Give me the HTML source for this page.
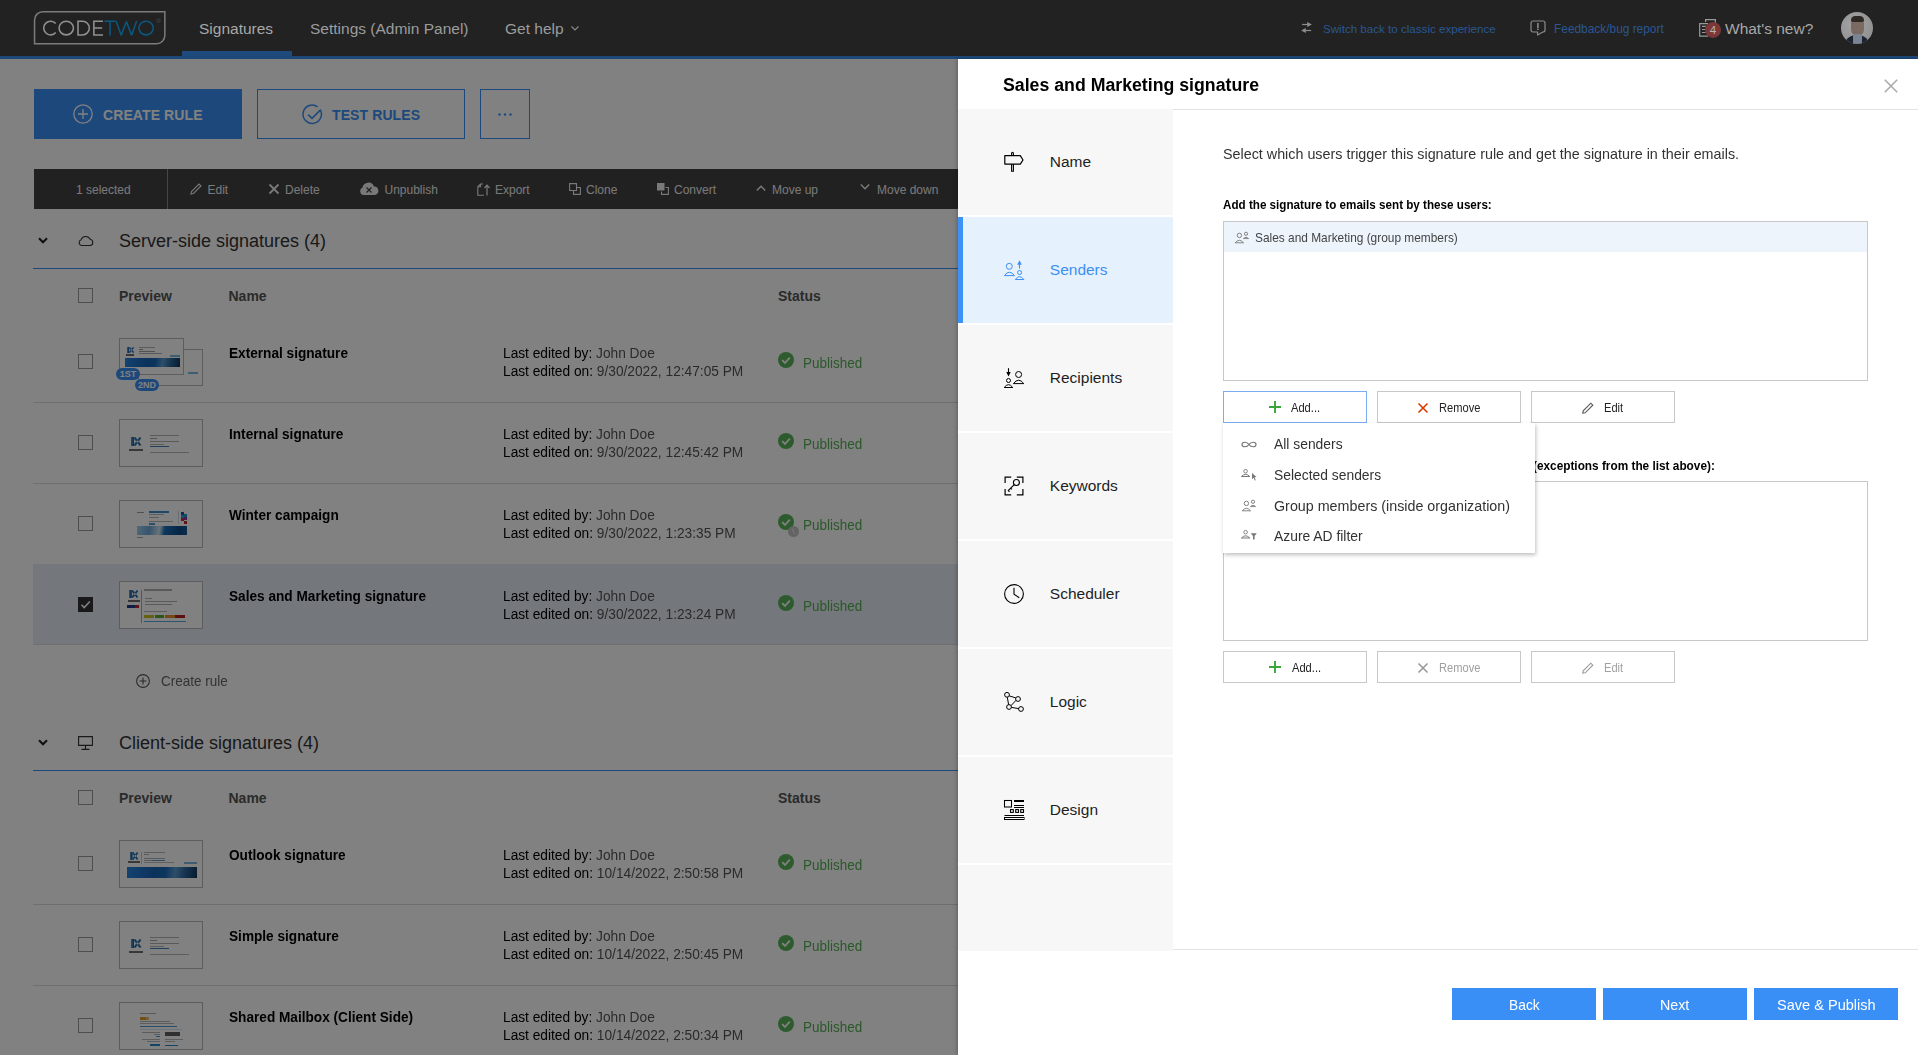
<!DOCTYPE html><html><head><meta charset="utf-8"><style>
*{box-sizing:border-box;margin:0;padding:0}
html,body{width:1918px;height:1055px;overflow:hidden;background:#fff}
body{position:relative;font-family:"Liberation Sans",sans-serif;color:#000}
.a{position:absolute;white-space:nowrap}
svg{position:absolute;overflow:visible}
.box{position:absolute}
</style></head><body>
<div class="box" style="left:0;top:0;width:1918px;height:56px;background:#434343"></div>
<div class="box" style="left:0;top:56px;width:1918px;height:3px;background:#3b8ef0"></div>
<div class="box" style="left:34px;top:89px;width:208px;height:50px;background:#3a8ff6"></div>
<svg style="left:73px;top:104px" width="20" height="20" viewBox="0 0 20 20"><circle cx="10" cy="10" r="9.2" fill="none" stroke="#fff" stroke-width="1.3"/><path d="M10 5 V15 M5 10 H15" stroke="#fff" stroke-width="1.3"/></svg>
<div class="a" style="left:103px;top:106px;font-size:14px;line-height:18px;color:#fff;font-weight:bold;letter-spacing:0.1px;">CREATE RULE</div>
<div class="box" style="left:257px;top:89px;width:208px;height:50px;border:1.5px solid #3a8ff6"></div>
<svg style="left:303px;top:105px" width="20" height="20" viewBox="0 0 20 20"><path d="M17.6 5.5 A9.2 9.2 0 1 1 14.6 1.8" fill="none" stroke="#3a8ff6" stroke-width="1.5"/><path d="M5.2 9.6 L9 13.4 L17.8 4.6" fill="none" stroke="#3a8ff6" stroke-width="1.6"/></svg>
<div class="a" style="left:332px;top:106px;font-size:14px;line-height:18px;color:#3a8ff6;font-weight:bold;letter-spacing:0.1px;">TEST RULES</div>
<div class="box" style="left:480px;top:89px;width:50px;height:50px;border:1.5px solid #3a8ff6"></div>
<svg style="left:498px;top:113px" width="14" height="3" viewBox="0 0 14 3"><circle cx="1.5" cy="1.5" r="1.2" fill="#3a8ff6"/><circle cx="7" cy="1.5" r="1.2" fill="#3a8ff6"/><circle cx="12.5" cy="1.5" r="1.2" fill="#3a8ff6"/></svg>
<div class="box" style="left:34px;top:169px;width:924px;height:40px;background:#414141"></div>
<div class="box" style="left:167px;top:169px;width:1px;height:40px;background:#8a8a8a"></div>
<div class="a" style="left:76px;top:183px;font-size:12px;line-height:15px;color:#f0f0f0;">1 selected</div>
<svg style="left:190px;top:183px" width="12" height="12" viewBox="0 0 12 12"><path d="M1 11 L1.5 8.5 L9 1 L11 3 L3.5 10.5 Z" fill="none" stroke="#f0f0f0" stroke-width="1.1"/></svg>
<div class="a" style="left:207.5px;top:183px;font-size:12px;line-height:15px;color:#f0f0f0;">Edit</div>
<svg style="left:269px;top:184px" width="10" height="10" viewBox="0 0 10 10"><path d="M0.5 0.5 L9.5 9.5 M9.5 0.5 L0.5 9.5" stroke="#f0f0f0" stroke-width="1.8"/></svg>
<div class="a" style="left:285px;top:183px;font-size:12px;line-height:15px;color:#f0f0f0;">Delete</div>
<svg style="left:359px;top:183px" width="20" height="12" viewBox="0 0 20 12"><path d="M4 12 A4 4 0 0 1 3.5 4.5 A6 6 0 0 1 15 3.5 A4.3 4.3 0 0 1 16 12 Z" fill="#f0f0f0"/><path d="M7.5 4.5 L12.5 9.5 M12.5 4.5 L7.5 9.5" stroke="#414141" stroke-width="1.2"/></svg>
<div class="a" style="left:384.5px;top:183px;font-size:12px;line-height:15px;color:#f0f0f0;">Unpublish</div>
<svg style="left:477px;top:183px" width="13" height="13" viewBox="0 0 13 13"><path d="M6 1 H3.5 L0.8 3.8 V12.3 H7 M3.5 1 V3.8 H0.8" fill="none" stroke="#f0f0f0" stroke-width="1.1"/><path d="M10 12.5 V2.5 M7.5 5 L10 2.2 L12.5 5" fill="none" stroke="#f0f0f0" stroke-width="1.2"/></svg>
<div class="a" style="left:495px;top:183px;font-size:12px;line-height:15px;color:#f0f0f0;">Export</div>
<svg style="left:569px;top:183px" width="12" height="12" viewBox="0 0 12 12"><path d="M0.6 0.6 H7.5 V7.5 H0.6 Z M7.5 4.5 H11.4 V11.4 H4.5 V7.5" fill="none" stroke="#f0f0f0" stroke-width="1.1"/></svg>
<div class="a" style="left:586px;top:183px;font-size:12px;line-height:15px;color:#f0f0f0;">Clone</div>
<svg style="left:657px;top:183px" width="12" height="12" viewBox="0 0 12 12"><rect x="0" y="0" width="7.5" height="7.5" fill="#f0f0f0"/><path d="M8.5 4.5 H11.4 V11.4 H4.5 V8.5" fill="none" stroke="#f0f0f0" stroke-width="1.1"/></svg>
<div class="a" style="left:674px;top:183px;font-size:12px;line-height:15px;color:#f0f0f0;">Convert</div>
<svg style="left:756px;top:185px" width="10" height="6" viewBox="0 0 10 6"><path d="M0.8 5.5 L5 1.2 L9.2 5.5" fill="none" stroke="#f0f0f0" stroke-width="1.5"/></svg>
<div class="a" style="left:772px;top:183px;font-size:12px;line-height:15px;color:#f0f0f0;">Move up</div>
<svg style="left:860px;top:184px" width="10" height="6" viewBox="0 0 10 6"><path d="M0.8 0.5 L5 4.8 L9.2 0.5" fill="none" stroke="#f0f0f0" stroke-width="1.5"/></svg>
<div class="a" style="left:877px;top:183px;font-size:12px;line-height:15px;color:#f0f0f0;">Move down</div>
<svg style="left:38px;top:237px" width="10" height="7" viewBox="0 0 10 7"><path d="M1 1.2 L5 5.2 L9 1.2" fill="none" stroke="#222" stroke-width="2.1"/></svg><svg style="left:78px;top:236px" width="16" height="10" viewBox="0 0 16 10"><path d="M3.5 9.5 A3 3 0 0 1 3 3.8 A5 5 0 0 1 12.2 3.3 A3.2 3.2 0 0 1 12.5 9.5 Z" fill="none" stroke="#333" stroke-width="1.1"/></svg><div class="a" style="left:119px;top:230px;font-size:18px;line-height:22px;color:#333;">Server-side signatures (4)</div><div class="box" style="left:33px;top:268px;width:925px;height:1px;background:#3a8ff6"></div><div class="box" style="left:78px;top:288px;width:15px;height:15px;border:1px solid #9a9a9a;background:#fff"></div><div class="a" style="left:119px;top:287px;font-size:14px;line-height:18px;color:#555;font-weight:bold;">Preview</div><div class="a" style="left:228.5px;top:287px;font-size:14px;line-height:18px;color:#555;font-weight:bold;">Name</div><div class="a" style="left:778px;top:287px;font-size:14px;line-height:18px;color:#555;font-weight:bold;">Status</div><div class="box" style="left:33px;top:402px;width:925px;height:1px;background:#dcdcdc"></div><div class="box" style="left:78px;top:354px;width:15px;height:15px;border:1px solid #9a9a9a;background:#fff"></div><div class="box" style="left:138px;top:349px;width:65px;height:37px;border:1px solid #b8b8b8;background:#fff"></div><div class="box" style="left:188px;top:372px;width:10px;height:1.5px;background:#7ab8e0;"></div><div class="box" style="left:119px;top:338px;width:65px;height:37px;border:1px solid #b8b8b8;background:#fff;overflow:hidden"><svg style="left:7px;top:8px" width="7" height="6" viewBox="0 0 10 10" preserveAspectRatio="none"><rect x="0" y="0" width="3" height="10" fill="#5a8fc0"/><rect x="1.5" y="0" width="1.5" height="10" fill="#1f62a8"/><path d="M3.5 0.5 L9.5 9.5 M9.5 0.5 L3.5 9.5" stroke="#2a70b0" stroke-width="2.2"/><rect x="5.5" y="4" width="2" height="2" fill="#fff"/></svg><div class="box" style="left:6px;top:15px;width:8px;height:1.5px;background:#707070;"></div><div class="box" style="left:19px;top:8px;width:16px;height:1px;background:#b4b4b4;"></div><div class="box" style="left:19px;top:10px;width:4px;height:1px;background:#a0a0a0;"></div><div class="box" style="left:19px;top:12px;width:16px;height:1px;background:#a0a0a0;"></div><div class="box" style="left:19px;top:14px;width:23px;height:1px;background:#b0b0b0;"></div><div class="box" style="left:50px;top:16px;width:10px;height:1.5px;background:#7ab8e0;"></div><div class="box" style="left:5px;top:19px;width:55px;height:9px;background:linear-gradient(100deg,#2a86e0 0,#1f74cc 20%,#1664b4 40%,#1a6cbc 55%,#5a9ad0 68%,#2a68a0 82%,#103458 100%);"></div></div><div class="a" style="left:116px;top:368px;width:24px;height:12px;border-radius:6px;background:#3a8ff6;color:#fff;font-size:9px;font-weight:bold;line-height:12px;text-align:center">1ST</div><div class="a" style="left:135px;top:379px;width:24px;height:12px;border-radius:6px;background:#3a8ff6;color:#fff;font-size:9px;font-weight:bold;line-height:12px;text-align:center">2ND</div><div class="a" style="left:228.5px;top:343px;font-size:15px;line-height:19px;color:#000;font-weight:bold;transform:scaleX(0.9090);transform-origin:0 0;">External signature</div><div class="a" style="left:503.3px;top:344px;font-size:14px;line-height:18px;color:#000;transform:scaleX(0.9800);transform-origin:0 0;">Last edited by: <span style="color:#555">John Doe</span></div><div class="a" style="left:503.3px;top:362px;font-size:14px;line-height:18px;color:#000;transform:scaleX(0.9800);transform-origin:0 0;">Last edited on: <span style="color:#555">9/30/2022, 12:47:05 PM</span></div><svg style="left:778px;top:352px" width="16" height="16" viewBox="0 0 16 16"><circle cx="8" cy="8" r="8" fill="#5ab55a"/><path d="M4.2 8.2 L7 11 L11.8 5.6" fill="none" stroke="#fff" stroke-width="1.8"/></svg><div class="a" style="left:803.2px;top:354px;font-size:14.5px;line-height:18px;color:#55b055;transform:scaleX(0.9300);transform-origin:0 0;">Published</div><div class="box" style="left:33px;top:483px;width:925px;height:1px;background:#dcdcdc"></div><div class="box" style="left:78px;top:435px;width:15px;height:15px;border:1px solid #9a9a9a;background:#fff"></div><div class="box" style="left:119px;top:419px;width:84px;height:48px;border:1px solid #b8b8b8;background:#fff;overflow:hidden"><svg style="left:11px;top:17px" width="10" height="9" viewBox="0 0 10 10" preserveAspectRatio="none"><rect x="0" y="0" width="3" height="10" fill="#5a8fc0"/><rect x="1.5" y="0" width="1.5" height="10" fill="#1f62a8"/><path d="M3.5 0.5 L9.5 9.5 M9.5 0.5 L3.5 9.5" stroke="#2a70b0" stroke-width="2.2"/><rect x="5.5" y="4" width="2" height="2" fill="#fff"/></svg><div class="box" style="left:9px;top:29px;width:14px;height:1.5px;background:#707070;"></div><div class="box" style="left:30px;top:15px;width:29px;height:1px;background:#b4b4b4;"></div><div class="box" style="left:30px;top:18px;width:7px;height:1px;background:#a8a8a8;"></div><div class="box" style="left:30px;top:21px;width:29px;height:1px;background:#b0b0b0;"></div><div class="box" style="left:30px;top:24px;width:14px;height:1px;background:#b8b8b8;"></div><div class="box" style="left:30px;top:26px;width:19px;height:1px;background:#3a7fc0;"></div><div class="box" style="left:30px;top:32px;width:39px;height:1px;background:#b8b8b8;"></div></div><div class="a" style="left:228.5px;top:424px;font-size:15px;line-height:19px;color:#000;font-weight:bold;transform:scaleX(0.9090);transform-origin:0 0;">Internal signature</div><div class="a" style="left:503.3px;top:425px;font-size:14px;line-height:18px;color:#000;transform:scaleX(0.9800);transform-origin:0 0;">Last edited by: <span style="color:#555">John Doe</span></div><div class="a" style="left:503.3px;top:443px;font-size:14px;line-height:18px;color:#000;transform:scaleX(0.9800);transform-origin:0 0;">Last edited on: <span style="color:#555">9/30/2022, 12:45:42 PM</span></div><svg style="left:778px;top:433px" width="16" height="16" viewBox="0 0 16 16"><circle cx="8" cy="8" r="8" fill="#5ab55a"/><path d="M4.2 8.2 L7 11 L11.8 5.6" fill="none" stroke="#fff" stroke-width="1.8"/></svg><div class="a" style="left:803.2px;top:435px;font-size:14.5px;line-height:18px;color:#55b055;transform:scaleX(0.9300);transform-origin:0 0;">Published</div><div class="box" style="left:33px;top:564px;width:925px;height:1px;background:#dcdcdc"></div><div class="box" style="left:78px;top:516px;width:15px;height:15px;border:1px solid #9a9a9a;background:#fff"></div><div class="box" style="left:119px;top:500px;width:84px;height:48px;border:1px solid #b8b8b8;background:#fff;overflow:hidden"><div class="box" style="left:17px;top:11px;width:7px;height:1px;background:#a0a0a0;"></div><div class="box" style="left:29px;top:10px;width:20px;height:2px;background:#3a8fd0;"></div><div class="box" style="left:29px;top:13px;width:15px;height:1px;background:#b8b8b8;"></div><div class="box" style="left:29px;top:16px;width:10px;height:1px;background:#b4b4b4;"></div><div class="box" style="left:29px;top:20px;width:24px;height:1px;background:#b8b8b8;"></div><div class="box" style="left:29px;top:22px;width:6px;height:2px;background:#4aa0d8;"></div><div class="box" style="left:58px;top:10px;width:1px;height:13px;background:#cde;"></div><div class="box" style="left:61px;top:11px;width:3px;height:3px;background:#2a4f9c;"></div><div class="box" style="left:64px;top:13px;width:3px;height:3px;background:#1a9ad0;"></div><div class="box" style="left:61px;top:14px;width:3px;height:3px;background:#2aa0e0;"></div><div class="box" style="left:64px;top:16px;width:3px;height:3px;background:#8a3a9a;"></div><div class="box" style="left:61px;top:17px;width:3px;height:3px;background:#c03030;"></div><div class="box" style="left:64px;top:20px;width:3px;height:3px;background:#c02828;"></div><div class="box" style="left:17px;top:25px;width:50px;height:9px;background:linear-gradient(100deg,#a8cce8 0,#6aa8d8 25%,#d0e4f0 45%,#1a70b8 55%,#0a4a8a 85%,#1a5a98 100%);"></div><div class="box" style="left:17px;top:36px;width:6px;height:1px;background:#a8a8a8;"></div></div><div class="a" style="left:228.5px;top:505px;font-size:15px;line-height:19px;color:#000;font-weight:bold;transform:scaleX(0.9090);transform-origin:0 0;">Winter campaign</div><div class="a" style="left:503.3px;top:506px;font-size:14px;line-height:18px;color:#000;transform:scaleX(0.9800);transform-origin:0 0;">Last edited by: <span style="color:#555">John Doe</span></div><div class="a" style="left:503.3px;top:524px;font-size:14px;line-height:18px;color:#000;transform:scaleX(0.9800);transform-origin:0 0;">Last edited on: <span style="color:#555">9/30/2022, 1:23:35 PM</span></div><svg style="left:778px;top:514px" width="16" height="16" viewBox="0 0 16 16"><circle cx="8" cy="8" r="8" fill="#5ab55a"/><path d="M4.2 8.2 L7 11 L11.8 5.6" fill="none" stroke="#fff" stroke-width="1.8"/></svg><div class="a" style="left:803.2px;top:516px;font-size:14.5px;line-height:18px;color:#55b055;transform:scaleX(0.9300);transform-origin:0 0;">Published</div><div class="box" style="left:33px;top:564px;width:925px;height:80px;background:#e6ebf3"></div><div class="box" style="left:33px;top:644px;width:925px;height:1px;background:#dcdcdc"></div><div class="box" style="left:78px;top:597px;width:15px;height:15px;background:#333"></div><svg style="left:78px;top:597px" width="15" height="15" viewBox="0 0 15 15"><path d="M3.5 7.8 L6.2 10.5 L11.8 4.5" fill="none" stroke="#fff" stroke-width="1.6"/></svg><div class="box" style="left:119px;top:581px;width:84px;height:48px;border:1px solid #b8b8b8;background:#fff;overflow:hidden"><svg style="left:9px;top:8px" width="9" height="8" viewBox="0 0 10 10" preserveAspectRatio="none"><rect x="0" y="0" width="3" height="10" fill="#5a8fc0"/><rect x="1.5" y="0" width="1.5" height="10" fill="#1f62a8"/><path d="M3.5 0.5 L9.5 9.5 M9.5 0.5 L3.5 9.5" stroke="#2a70b0" stroke-width="2.2"/><rect x="5.5" y="4" width="2" height="2" fill="#fff"/></svg><div class="box" style="left:8px;top:18px;width:12px;height:1.5px;background:#707070;"></div><div class="box" style="left:7px;top:23px;width:8px;height:3px;background:#1a3f8a;"></div><div class="box" style="left:15px;top:23px;width:4px;height:3px;background:#c02828;"></div><div class="box" style="left:21px;top:8px;width:1px;height:33px;background:#aaa;"></div><div class="box" style="left:24px;top:7px;width:28px;height:2px;background:#b0b0b0;"></div><div class="box" style="left:25px;top:16px;width:7px;height:1px;background:#b4b4b4;"></div><div class="box" style="left:25px;top:19px;width:32px;height:1px;background:#b0b0b0;"></div><div class="box" style="left:25px;top:22px;width:27px;height:1px;background:#b0b0b0;"></div><div class="box" style="left:24px;top:29px;width:23px;height:1px;background:#b8b8b8;"></div><div class="box" style="left:24px;top:33px;width:10px;height:3px;background:#c8c020;"></div><div class="box" style="left:35px;top:33px;width:9px;height:3px;background:#5aa838;"></div><div class="box" style="left:45px;top:33px;width:10px;height:3px;background:#e8902a;"></div><div class="box" style="left:55px;top:33px;width:10px;height:3px;background:#b82020;"></div><div class="box" style="left:24px;top:39px;width:42px;height:1px;background:#5aa8d8;"></div></div><div class="a" style="left:228.5px;top:586px;font-size:15px;line-height:19px;color:#000;font-weight:bold;transform:scaleX(0.9090);transform-origin:0 0;">Sales and Marketing signature</div><div class="a" style="left:503.3px;top:587px;font-size:14px;line-height:18px;color:#000;transform:scaleX(0.9800);transform-origin:0 0;">Last edited by: <span style="color:#555">John Doe</span></div><div class="a" style="left:503.3px;top:605px;font-size:14px;line-height:18px;color:#000;transform:scaleX(0.9800);transform-origin:0 0;">Last edited on: <span style="color:#555">9/30/2022, 1:23:24 PM</span></div><svg style="left:778px;top:595px" width="16" height="16" viewBox="0 0 16 16"><circle cx="8" cy="8" r="8" fill="#5ab55a"/><path d="M4.2 8.2 L7 11 L11.8 5.6" fill="none" stroke="#fff" stroke-width="1.8"/></svg><div class="a" style="left:803.2px;top:597px;font-size:14.5px;line-height:18px;color:#55b055;transform:scaleX(0.9300);transform-origin:0 0;">Published</div>
<svg style="left:787.5px;top:525.5px" width="11" height="11" viewBox="0 0 11 11"><circle cx="5.5" cy="5.5" r="5.5" fill="#c4c4c4"/><path d="M5 2.5 V5.8 L7.3 7.8" fill="none" stroke="#eee" stroke-width="1"/></svg>
<svg style="left:136px;top:674px" width="14" height="14" viewBox="0 0 14 14"><circle cx="7" cy="7" r="6.4" fill="none" stroke="#555" stroke-width="1.1"/><path d="M7 3.5 V10.5 M3.5 7 H10.5" stroke="#555" stroke-width="1.1"/></svg>
<div class="a" style="left:161.2px;top:672px;font-size:14.5px;line-height:18px;color:#666;transform:scaleX(0.9300);transform-origin:0 0;">Create rule</div>
<svg style="left:38px;top:739px" width="10" height="7" viewBox="0 0 10 7"><path d="M1 1.2 L5 5.2 L9 1.2" fill="none" stroke="#222" stroke-width="2.1"/></svg><svg style="left:78px;top:736px" width="15" height="14" viewBox="0 0 15 14"><path d="M0.6 0.6 H14.4 V9.4 H0.6 Z M7.5 9.5 V13 M3.5 13.4 H11.5" fill="none" stroke="#333" stroke-width="1.1"/></svg><div class="a" style="left:119px;top:732px;font-size:18px;line-height:22px;color:#333;">Client-side signatures (4)</div><div class="box" style="left:33px;top:770px;width:925px;height:1px;background:#3a8ff6"></div><div class="box" style="left:78px;top:790px;width:15px;height:15px;border:1px solid #9a9a9a;background:#fff"></div><div class="a" style="left:119px;top:789px;font-size:14px;line-height:18px;color:#555;font-weight:bold;">Preview</div><div class="a" style="left:228.5px;top:789px;font-size:14px;line-height:18px;color:#555;font-weight:bold;">Name</div><div class="a" style="left:778px;top:789px;font-size:14px;line-height:18px;color:#555;font-weight:bold;">Status</div><div class="box" style="left:33px;top:904px;width:925px;height:1px;background:#dcdcdc"></div><div class="box" style="left:78px;top:856px;width:15px;height:15px;border:1px solid #9a9a9a;background:#fff"></div><div class="box" style="left:119px;top:840px;width:84px;height:48px;border:1px solid #b8b8b8;background:#fff;overflow:hidden"><svg style="left:10px;top:11px" width="8" height="8" viewBox="0 0 10 10" preserveAspectRatio="none"><rect x="0" y="0" width="3" height="10" fill="#5a8fc0"/><rect x="1.5" y="0" width="1.5" height="10" fill="#1f62a8"/><path d="M3.5 0.5 L9.5 9.5 M9.5 0.5 L3.5 9.5" stroke="#2a70b0" stroke-width="2.2"/><rect x="5.5" y="4" width="2" height="2" fill="#fff"/></svg><div class="box" style="left:8px;top:20px;width:12px;height:1.5px;background:#707070;"></div><div class="box" style="left:21px;top:11px;width:1px;height:12px;background:#ccc;"></div><div class="box" style="left:24px;top:11px;width:21px;height:1px;background:#b4b4b4;"></div><div class="box" style="left:24px;top:13px;width:5px;height:1px;background:#b4b4b4;"></div><div class="box" style="left:24px;top:17px;width:21px;height:1px;background:#b0b0b0;"></div><div class="box" style="left:24px;top:19px;width:8px;height:1px;background:#b0b0b0;"></div><div class="box" style="left:32px;top:19px;width:13px;height:1px;background:#5a9ad0;"></div><div class="box" style="left:24px;top:21px;width:30px;height:1px;background:#c0c0c0;"></div><div class="box" style="left:64px;top:21px;width:13px;height:2px;background:#7ab8e0;"></div><div class="box" style="left:7px;top:26px;width:70px;height:11px;background:linear-gradient(100deg,#2a86e0 0,#1f74cc 20%,#1664b4 40%,#1a6cbc 55%,#5a9ad0 68%,#2a68a0 82%,#103458 100%);"></div></div><div class="a" style="left:228.5px;top:845px;font-size:15px;line-height:19px;color:#000;font-weight:bold;transform:scaleX(0.9090);transform-origin:0 0;">Outlook signature</div><div class="a" style="left:503.3px;top:846px;font-size:14px;line-height:18px;color:#000;transform:scaleX(0.9800);transform-origin:0 0;">Last edited by: <span style="color:#555">John Doe</span></div><div class="a" style="left:503.3px;top:864px;font-size:14px;line-height:18px;color:#000;transform:scaleX(0.9800);transform-origin:0 0;">Last edited on: <span style="color:#555">10/14/2022, 2:50:58 PM</span></div><svg style="left:778px;top:854px" width="16" height="16" viewBox="0 0 16 16"><circle cx="8" cy="8" r="8" fill="#5ab55a"/><path d="M4.2 8.2 L7 11 L11.8 5.6" fill="none" stroke="#fff" stroke-width="1.8"/></svg><div class="a" style="left:803.2px;top:856px;font-size:14.5px;line-height:18px;color:#55b055;transform:scaleX(0.9300);transform-origin:0 0;">Published</div><div class="box" style="left:33px;top:985px;width:925px;height:1px;background:#dcdcdc"></div><div class="box" style="left:78px;top:937px;width:15px;height:15px;border:1px solid #9a9a9a;background:#fff"></div><div class="box" style="left:119px;top:921px;width:84px;height:48px;border:1px solid #b8b8b8;background:#fff;overflow:hidden"><svg style="left:11px;top:17px" width="10" height="9" viewBox="0 0 10 10" preserveAspectRatio="none"><rect x="0" y="0" width="3" height="10" fill="#5a8fc0"/><rect x="1.5" y="0" width="1.5" height="10" fill="#1f62a8"/><path d="M3.5 0.5 L9.5 9.5 M9.5 0.5 L3.5 9.5" stroke="#2a70b0" stroke-width="2.2"/><rect x="5.5" y="4" width="2" height="2" fill="#fff"/></svg><div class="box" style="left:9px;top:29px;width:14px;height:1.5px;background:#707070;"></div><div class="box" style="left:30px;top:15px;width:29px;height:1px;background:#b4b4b4;"></div><div class="box" style="left:30px;top:18px;width:7px;height:1px;background:#a8a8a8;"></div><div class="box" style="left:30px;top:21px;width:29px;height:1px;background:#b0b0b0;"></div><div class="box" style="left:30px;top:24px;width:14px;height:1px;background:#b8b8b8;"></div><div class="box" style="left:30px;top:26px;width:19px;height:1px;background:#3a7fc0;"></div><div class="box" style="left:30px;top:32px;width:39px;height:1px;background:#b8b8b8;"></div></div><div class="a" style="left:228.5px;top:926px;font-size:15px;line-height:19px;color:#000;font-weight:bold;transform:scaleX(0.9090);transform-origin:0 0;">Simple signature</div><div class="a" style="left:503.3px;top:927px;font-size:14px;line-height:18px;color:#000;transform:scaleX(0.9800);transform-origin:0 0;">Last edited by: <span style="color:#555">John Doe</span></div><div class="a" style="left:503.3px;top:945px;font-size:14px;line-height:18px;color:#000;transform:scaleX(0.9800);transform-origin:0 0;">Last edited on: <span style="color:#555">10/14/2022, 2:50:45 PM</span></div><svg style="left:778px;top:935px" width="16" height="16" viewBox="0 0 16 16"><circle cx="8" cy="8" r="8" fill="#5ab55a"/><path d="M4.2 8.2 L7 11 L11.8 5.6" fill="none" stroke="#fff" stroke-width="1.8"/></svg><div class="a" style="left:803.2px;top:937px;font-size:14.5px;line-height:18px;color:#55b055;transform:scaleX(0.9300);transform-origin:0 0;">Published</div><div class="box" style="left:33px;top:1066px;width:925px;height:1px;background:#dcdcdc"></div><div class="box" style="left:78px;top:1018px;width:15px;height:15px;border:1px solid #9a9a9a;background:#fff"></div><div class="box" style="left:119px;top:1002px;width:84px;height:48px;border:1px solid #b8b8b8;background:#fff;overflow:hidden"><div class="box" style="left:20px;top:10px;width:16px;height:1px;background:#b0b0b0;"></div><div class="box" style="left:20px;top:14px;width:3px;height:3px;background:#e0a020;"></div><div class="box" style="left:23px;top:14px;width:3px;height:3px;background:#e0a020;"></div><div class="box" style="left:26px;top:14px;width:3px;height:3px;background:#e8c070;"></div><div class="box" style="left:20px;top:18px;width:30px;height:1px;background:#b8b8b8;"></div><div class="box" style="left:20px;top:20px;width:34px;height:1px;background:#b8b8b8;"></div><div class="box" style="left:20px;top:23px;width:37px;height:1px;background:#4a98d0;"></div><div class="box" style="left:20px;top:26px;width:42px;height:1px;background:#d8e4ee;"></div><div class="box" style="left:22px;top:29px;width:18px;height:1px;background:#b4b4b4;"></div><div class="box" style="left:34px;top:31px;width:6px;height:1px;background:#b4b4b4;"></div><div class="box" style="left:36px;top:33px;width:4px;height:1px;background:#4a98d0;"></div><div class="box" style="left:45px;top:29px;width:15px;height:4px;background:#606060;"></div><div class="box" style="left:22px;top:36px;width:18px;height:1px;background:#b8b8b8;"></div><div class="box" style="left:45px;top:36px;width:18px;height:1px;background:#b8b8b8;"></div><div class="box" style="left:27px;top:38px;width:13px;height:1px;background:#b8b8b8;"></div><div class="box" style="left:45px;top:38px;width:10px;height:1px;background:#b8b8b8;"></div><div class="box" style="left:30px;top:41px;width:10px;height:2px;background:#2a88c8;"></div><div class="box" style="left:45px;top:42px;width:13px;height:1px;background:#2a88c8;"></div></div><div class="a" style="left:228.5px;top:1007px;font-size:15px;line-height:19px;color:#000;font-weight:bold;transform:scaleX(0.9090);transform-origin:0 0;">Shared Mailbox (Client Side)</div><div class="a" style="left:503.3px;top:1008px;font-size:14px;line-height:18px;color:#000;transform:scaleX(0.9800);transform-origin:0 0;">Last edited by: <span style="color:#555">John Doe</span></div><div class="a" style="left:503.3px;top:1026px;font-size:14px;line-height:18px;color:#000;transform:scaleX(0.9800);transform-origin:0 0;">Last edited on: <span style="color:#555">10/14/2022, 2:50:34 PM</span></div><svg style="left:778px;top:1016px" width="16" height="16" viewBox="0 0 16 16"><circle cx="8" cy="8" r="8" fill="#5ab55a"/><path d="M4.2 8.2 L7 11 L11.8 5.6" fill="none" stroke="#fff" stroke-width="1.8"/></svg><div class="a" style="left:803.2px;top:1018px;font-size:14.5px;line-height:18px;color:#55b055;transform:scaleX(0.9300);transform-origin:0 0;">Published</div>
<div class="box" style="left:0;top:0;width:1918px;height:1055px;background:rgba(0,0,0,0.495)"></div>
<svg style="left:0;top:0" width="200" height="56" viewBox="0 0 200 56"><path d="M42.5 11.75 H164.85 V35.5 A8.2 8.2 0 0 1 156.65 43.7 H34.55 V19.95 A8.2 8.2 0 0 1 42.75 11.75 Z" fill="none" stroke="#7c7c7c" stroke-width="1.5"/><g fill="none" stroke="#919191" stroke-width="1.55"><path d="M55.7 23.6 A6.8 6.85 0 1 0 55.7 32.5"/><ellipse cx="66.25" cy="28.05" rx="7.2" ry="6.85"/><path d="M78 21.2 H82.5 A6.85 6.85 0 0 1 82.5 34.9 H78 Z"/><path d="M103 21.2 H93.85 V34.9 H103 M93.85 28.05 H102.2"/></g><g fill="none" stroke="#0a5880" stroke-width="1.55"><path d="M104.4 21.2 H115.6 M110.1 21.2 V35.6"/><path d="M116.1 21 L121.2 35.2 L126.4 21.6 L131.6 35.2 L136.7 21" stroke-linejoin="bevel"/><ellipse cx="146.1" cy="28.05" rx="7.2" ry="6.85"/></g><circle cx="158.6" cy="20.6" r="1.6" fill="none" stroke="#555" stroke-width="0.6"/></svg>
<div class="a" style="left:199px;top:19px;font-size:15.5px;line-height:19px;color:#a8a8a8;">Signatures</div>
<div class="box" style="left:182px;top:51px;width:110px;height:5px;background:#1e4a7c"></div>
<div class="a" style="left:310px;top:19px;font-size:15.5px;line-height:19px;color:#9c9c9c;">Settings (Admin Panel)</div>
<div class="a" style="left:505px;top:19px;font-size:15.5px;line-height:19px;color:#9c9c9c;">Get help</div>
<svg style="left:571px;top:26px" width="8" height="5" viewBox="0 0 8 5"><path d="M0.5 0.5 L4 4 L7.5 0.5" fill="none" stroke="#888" stroke-width="1.2"/></svg>
<svg style="left:1295px;top:15px" width="25" height="25" viewBox="0 0 25 25"><path d="M7.1 9.5 H13" stroke="#8f8f8f" stroke-width="1.2"/><path d="M12.2 6.9 L16.9 9.5 L12.2 12 Z" fill="#8f8f8f"/><path d="M10.5 15.5 H16.1" stroke="#8f8f8f" stroke-width="1.2"/><path d="M10.8 12.9 L6.2 15.5 L10.8 18.1 Z" fill="#8f8f8f"/></svg>
<div class="a" style="left:1323px;top:22px;font-size:11.6px;line-height:14px;color:#2a5794;">Switch back to classic experience</div>
<svg style="left:1525px;top:14px" width="25" height="25" viewBox="0 0 25 25"><path d="M8 7 H18 A2 2 0 0 1 20 9 V16 A2 2 0 0 1 18 18 H17.8 L12.6 21 V18 H8 A2 2 0 0 1 6 16 V9 A2 2 0 0 1 8 7 Z" fill="none" stroke="#8c8c8c" stroke-width="1.2" stroke-linejoin="round"/><path d="M12.9 9 V14.2" stroke="#8c8c8c" stroke-width="1.6"/><path d="M12.9 14.8 V16" stroke="#8c8c8c" stroke-width="1.6"/></svg>
<div class="a" style="left:1554px;top:22px;font-size:11.9px;line-height:15px;color:#2a5794;">Feedback/bug report</div>
<svg style="left:1695px;top:14px" width="30" height="30" viewBox="0 0 30 30"><path d="M10.6 8 V5.7 H20.4 V12" fill="none" stroke="#9a9a9a" stroke-width="1.2"/><path d="M13 9.7 H4.7 V22.1 H13" fill="none" stroke="#9a9a9a" stroke-width="1.2"/><path d="M7 12.4 H10.8 M7 15.5 H10.8 M7 18.5 H10.8" stroke="#9a9a9a" stroke-width="1.1"/><circle cx="18" cy="15.9" r="8" fill="#7c3838"/><text x="18" y="20" text-anchor="middle" font-family="Liberation Sans" font-size="11.5" fill="#b4b4b4">4</text></svg>
<div class="a" style="left:1725px;top:19px;font-size:15.5px;line-height:19px;color:#a8a8a8;">What's new?</div>
<div class="box" style="left:1841px;top:12px;width:32px;height:32px;border-radius:50%;background:radial-gradient(circle at 40% 40%,#a4a4a4,#8a8a8a);overflow:hidden"><div class="box" style="left:10px;top:6px;width:13px;height:18px;border-radius:6px 6px 8px 8px;background:#7a6a62;filter:blur(0.5px)"></div><div class="box" style="left:10px;top:4px;width:13px;height:6px;border-radius:7px 7px 3px 3px;background:#2e2824;filter:blur(0.5px)"></div><div class="box" style="left:3px;top:23px;width:26px;height:14px;border-radius:12px 12px 0 0;background:#1a2430"></div><div class="box" style="left:12px;top:22px;width:9px;height:12px;border-radius:2px;background:#7a8492"></div></div>
<div class="box" style="left:958px;top:59px;width:960px;height:996px;background:#fff;box-shadow:-1px 0 4px rgba(0,0,0,.25)"></div>
<div class="a" style="left:1003.2px;top:74px;font-size:18px;line-height:22px;color:#000;font-weight:bold;transform:scaleX(0.9843);transform-origin:0 0;">Sales and Marketing signature</div>
<svg style="left:1884px;top:79px" width="14" height="14" viewBox="0 0 14 14"><path d="M0.8 0.8 L13.2 13.2 M13.2 0.8 L0.8 13.2" stroke="#a8a8a8" stroke-width="1.5"/></svg>
<div class="box" style="left:1173px;top:109px;width:745px;height:1px;background:#e2e2e2"></div>
<div class="box" style="left:1173px;top:949px;width:745px;height:1px;background:#e2e2e2"></div>
<div class="box" style="left:958px;top:109px;width:215px;height:106px;background:#f7f7f7"></div>
<svg style="left:1003px;top:152px" width="20" height="20" viewBox="0 0 20 20"><path d="M1.8 3.6 H17.3 L20 8 L17.3 12.1 H1.8 Z" fill="none" stroke="#000" stroke-width="1.2" stroke-linejoin="round"/><path d="M8.6 3.6 V1.3 A0.9 1 0 0 1 10.4 1.3 V3.6" fill="none" stroke="#000" stroke-width="1.1"/><path d="M8.6 12.1 V19.3 H10.4 V12.1" fill="none" stroke="#000" stroke-width="1.1"/></svg>
<div class="a" style="left:1049.8px;top:152px;font-size:15.5px;line-height:19px;color:#1e1e1e;">Name</div>
<div class="box" style="left:958px;top:217px;width:215px;height:106px;background:#e5f1fd"></div>
<div class="box" style="left:958px;top:217px;width:5px;height:106px;background:#3d92f5"></div>
<svg style="left:1004px;top:260px" width="20" height="20" viewBox="0 0 20 20"><circle cx="5.3" cy="6.3" r="3" fill="none" stroke="#3d8ff2" stroke-width="1"/><path d="M0.4 15.6 Q5.3 8.8 10.5 15.6 Z" fill="none" stroke="#3d8ff2" stroke-width="1"/><path d="M15.5 8.5 V1.5" stroke="#3d8ff2" stroke-width="1.1"/><path d="M13.2 4.8 L15.5 0.2 L17.8 4.8 Z" fill="#3d8ff2"/><circle cx="15.6" cy="12.5" r="2" fill="none" stroke="#3d8ff2" stroke-width="1"/><path d="M11.3 19.5 Q15.6 13.8 19.8 19.5 Z" fill="none" stroke="#3d8ff2" stroke-width="1"/></svg>
<div class="a" style="left:1049.8px;top:260px;font-size:15.5px;line-height:19px;color:#3d8ff2;">Senders</div>
<div class="box" style="left:958px;top:325px;width:215px;height:106px;background:#f7f7f7"></div>
<svg style="left:1004px;top:368px" width="20" height="20" viewBox="0 0 20 20"><circle cx="14.6" cy="6.5" r="3" fill="none" stroke="#000" stroke-width="1"/><path d="M9.4 15.6 Q14.6 8.8 19.8 15.6 Z" fill="none" stroke="#000" stroke-width="1"/><path d="M4.5 0.2 V5" stroke="#000" stroke-width="1.1"/><path d="M2.3 4 L4.5 8.5 L6.7 4 Z" fill="#000"/><circle cx="4.5" cy="12.5" r="2" fill="none" stroke="#000" stroke-width="1"/><path d="M0.2 19.5 Q4.5 13.8 8.8 19.5 Z" fill="none" stroke="#000" stroke-width="1"/></svg>
<div class="a" style="left:1049.8px;top:368px;font-size:15.5px;line-height:19px;color:#1e1e1e;">Recipients</div>
<div class="box" style="left:958px;top:433px;width:215px;height:106px;background:#f7f7f7"></div>
<svg style="left:1004px;top:476px" width="20" height="20" viewBox="0 0 20 20"><path d="M1.1 7 V1.1 H7.2 M12.8 1.1 H18.9 V7 M18.9 13 V18.9 H12.8 M7.2 18.9 H1.1 V13" fill="none" stroke="#000" stroke-width="1.2"/><circle cx="12.4" cy="6.5" r="3" fill="none" stroke="#000" stroke-width="1.1"/><path d="M10.2 8.7 L4.3 14.6 L5.5 15.8 M6.8 12.3 L8 13.4" fill="none" stroke="#000" stroke-width="1.1"/></svg>
<div class="a" style="left:1049.8px;top:476px;font-size:15.5px;line-height:19px;color:#1e1e1e;">Keywords</div>
<div class="box" style="left:958px;top:541px;width:215px;height:106px;background:#f7f7f7"></div>
<svg style="left:1004px;top:584px" width="20" height="20" viewBox="0 0 20 20"><circle cx="10" cy="10" r="9.4" fill="none" stroke="#000" stroke-width="1.1"/><path d="M10 3.8 V10.2 L15.3 13.8" fill="none" stroke="#000" stroke-width="1.1"/></svg>
<div class="a" style="left:1049.8px;top:584px;font-size:15.5px;line-height:19px;color:#1e1e1e;">Scheduler</div>
<div class="box" style="left:958px;top:649px;width:215px;height:106px;background:#f7f7f7"></div>
<svg style="left:1004px;top:692px" width="20" height="20" viewBox="0 0 20 20"><circle cx="3" cy="2.8" r="2.4" fill="none" stroke="#000" stroke-width="1"/><circle cx="14" cy="7" r="2.4" fill="none" stroke="#000" stroke-width="1"/><circle cx="5" cy="15" r="2.4" fill="none" stroke="#000" stroke-width="1"/><circle cx="17" cy="17" r="2.4" fill="none" stroke="#000" stroke-width="1"/><path d="M5.2 3.9 L11.8 5.9 M3.3 5.2 L4.6 12.6 M7 13.7 L12 8.3 M7.4 15.4 L14.6 16.6" fill="none" stroke="#000" stroke-width="1"/></svg>
<div class="a" style="left:1049.8px;top:692px;font-size:15.5px;line-height:19px;color:#1e1e1e;">Logic</div>
<div class="box" style="left:958px;top:757px;width:215px;height:106px;background:#f7f7f7"></div>
<svg style="left:1004px;top:800px" width="20" height="20" viewBox="0 0 20 20"><rect x="0.5" y="0.5" width="7" height="6.5" fill="none" stroke="#000" stroke-width="1.05"/><rect x="10" y="0" width="10" height="2" fill="#000"/><rect x="10" y="5" width="10" height="1" fill="#000"/><rect x="10" y="7" width="10" height="1" fill="#000"/><rect x="6.5" y="9.6" width="2.8" height="2.8" fill="none" stroke="#000" stroke-width="1.1"/><rect x="11.7" y="9.6" width="2.8" height="2.8" fill="none" stroke="#000" stroke-width="1.1"/><rect x="16.7" y="9.6" width="2.8" height="2.8" fill="none" stroke="#000" stroke-width="1.1"/><rect x="0.5" y="15" width="19.5" height="1" fill="#000"/><rect x="0.5" y="17.5" width="19.5" height="2" fill="none" stroke="#000" stroke-width="1"/></svg>
<div class="a" style="left:1049.8px;top:800px;font-size:15.5px;line-height:19px;color:#1e1e1e;">Design</div>
<div class="box" style="left:958px;top:865px;width:215px;height:86px;background:#f7f7f7"></div>
<div class="a" style="left:1223px;top:144px;font-size:15px;line-height:19px;color:#333;transform:scaleX(0.9551);transform-origin:0 0;">Select which users trigger this signature rule and get the signature in their emails.</div>
<div class="a" style="left:1223px;top:197px;font-size:12.7px;line-height:16px;color:#000;font-weight:bold;transform:scaleX(0.9185);transform-origin:0 0;">Add the signature to emails sent by these users:</div>
<div class="box" style="left:1223px;top:221px;width:645px;height:160px;border:1px solid #c8c8c8"></div>
<div class="box" style="left:1224px;top:222px;width:643px;height:30px;background:#eef4fc"></div>
<svg style="left:1235px;top:232px" width="14" height="12" viewBox="0 0 14 12"><circle cx="4.4" cy="3.4" r="2.2" fill="none" stroke="#777" stroke-width="0.9"/><path d="M0.2 10.8 Q4.4 5.8 8.6 10.8 Z" fill="none" stroke="#777" stroke-width="0.9"/><circle cx="11" cy="1.8" r="1.6" fill="none" stroke="#777" stroke-width="0.9"/><path d="M8.3 6.6 Q11 3.8 13.7 6.6 Z" fill="#777" stroke="#777" stroke-width="0.6"/></svg>
<div class="a" style="left:1255.4px;top:230px;font-size:12.7px;line-height:16px;color:#444;transform:scaleX(0.9368);transform-origin:0 0;">Sales and Marketing (group members)</div>
<div class="box" style="left:1223px;top:391px;width:144px;height:32px;border:1px solid #c8c8c8;background:#fff"></div><svg style="left:1269px;top:401px" width="12" height="12" viewBox="0 0 12 12"><path d="M6 0 V12 M0 6 H12" stroke="#3aa53a" stroke-width="1.9"/></svg><div class="a" style="left:1291.3px;top:400px;font-size:12.5px;line-height:16px;color:#222;transform:scaleX(0.8900);transform-origin:0 0;">Add...</div>
<div class="box" style="left:1223px;top:391px;width:144px;height:32px;border:1px solid #7aaef0"></div>
<div class="box" style="left:1377px;top:391px;width:144px;height:32px;border:1px solid #c8c8c8;background:#fff"></div><svg style="left:1418px;top:402.5px" width="10" height="10" viewBox="0 0 10 10"><path d="M0.5 0.5 L9.5 9.5 M9.5 0.5 L0.5 9.5" stroke="#d83b01" stroke-width="1.6"/></svg><div class="a" style="left:1439px;top:400px;font-size:12.5px;line-height:16px;color:#222;transform:scaleX(0.8900);transform-origin:0 0;">Remove</div>
<div class="box" style="left:1531px;top:391px;width:144px;height:32px;border:1px solid #c8c8c8;background:#fff"></div><svg style="left:1582px;top:401.5px" width="12" height="12" viewBox="0 0 12 12"><path d="M0.8 11.2 L1.2 8.8 L8.8 1.2 L10.8 3.2 L3.2 10.8 Z" fill="none" stroke="#555" stroke-width="1.1"/></svg><div class="a" style="left:1604.4px;top:400px;font-size:12.5px;line-height:16px;color:#222;transform:scaleX(0.8900);transform-origin:0 0;">Edit</div>
<div class="a" style="left:1533px;top:458px;font-size:12.7px;line-height:16px;color:#000;font-weight:bold;transform:scaleX(0.9311);transform-origin:0 0;">(exceptions from the list above):</div>
<div class="box" style="left:1223px;top:481px;width:645px;height:160px;border:1px solid #c8c8c8"></div>
<div class="box" style="left:1223px;top:651px;width:144px;height:32px;border:1px solid #c8c8c8;background:#fff"></div><svg style="left:1269px;top:661px" width="12" height="12" viewBox="0 0 12 12"><path d="M6 0 V12 M0 6 H12" stroke="#3aa53a" stroke-width="1.9"/></svg><div class="a" style="left:1291.5px;top:660px;font-size:12.5px;line-height:16px;color:#222;transform:scaleX(0.8900);transform-origin:0 0;">Add...</div>
<div class="box" style="left:1377px;top:651px;width:144px;height:32px;border:1px solid #c8c8c8;background:#fff"></div><svg style="left:1418px;top:662.5px" width="10" height="10" viewBox="0 0 10 10"><path d="M0.5 0.5 L9.5 9.5 M9.5 0.5 L0.5 9.5" stroke="#999" stroke-width="1.6"/></svg><div class="a" style="left:1439px;top:660px;font-size:12.5px;line-height:16px;color:#a0a0a0;transform:scaleX(0.8900);transform-origin:0 0;">Remove</div>
<div class="box" style="left:1531px;top:651px;width:144px;height:32px;border:1px solid #c8c8c8;background:#fff"></div><svg style="left:1582px;top:661.5px" width="12" height="12" viewBox="0 0 12 12"><path d="M0.8 11.2 L1.2 8.8 L8.8 1.2 L10.8 3.2 L3.2 10.8 Z" fill="none" stroke="#999" stroke-width="1.1"/></svg><div class="a" style="left:1604.4px;top:660px;font-size:12.5px;line-height:16px;color:#a0a0a0;transform:scaleX(0.8900);transform-origin:0 0;">Edit</div>
<div class="box" style="left:1223px;top:423px;width:312px;height:130px;background:#fff;box-shadow:1px 2px 4px rgba(0,0,0,.25)"></div>
<svg style="left:1241px;top:441px" width="16" height="7" viewBox="0 0 16 7"><path d="M8 3.5 C6 0.5 1 0.5 1 3.5 C1 6.5 6 6.5 8 3.5 C10 0.5 15 0.5 15 3.5 C15 6.5 10 6.5 8 3.5 Z" fill="none" stroke="#777" stroke-width="1.2"/></svg>
<div class="a" style="left:1274px;top:435px;font-size:14.2px;line-height:18px;color:#333;transform:scaleX(0.9770);transform-origin:0 0;">All senders</div>
<svg style="left:1241px;top:469px" width="16" height="12" viewBox="0 0 16 12"><circle cx="4.6" cy="2.2" r="1.8" fill="none" stroke="#777" stroke-width="0.9"/><path d="M0.4 7.5 Q4.6 3.2 8.8 7.5 Z" fill="none" stroke="#777" stroke-width="1"/><path d="M11 4 L15.5 8 L13.5 8.3 L14.8 11.2 L13.9 11.6 L12.6 8.8 L11 10.2 Z" fill="#777"/></svg>
<div class="a" style="left:1274px;top:466px;font-size:14.2px;line-height:18px;color:#333;transform:scaleX(0.9770);transform-origin:0 0;">Selected senders</div>
<svg style="left:1242px;top:500px" width="14" height="12" viewBox="0 0 14 12"><circle cx="4.4" cy="3.4" r="2.2" fill="none" stroke="#777" stroke-width="0.9"/><path d="M0.2 10.8 Q4.4 5.8 8.6 10.8 Z" fill="none" stroke="#777" stroke-width="0.9"/><circle cx="11" cy="1.8" r="1.6" fill="none" stroke="#777" stroke-width="0.9"/><path d="M8.3 6.6 Q11 3.8 13.7 6.6 Z" fill="#777" stroke="#777" stroke-width="0.6"/></svg>
<div class="a" style="left:1274px;top:497px;font-size:14.2px;line-height:18px;color:#333;transform:scaleX(1.0077);transform-origin:0 0;">Group members (inside organization)</div>
<svg style="left:1241px;top:530px" width="16" height="12" viewBox="0 0 16 12"><circle cx="4.6" cy="2.2" r="1.8" fill="none" stroke="#777" stroke-width="0.9"/><path d="M0.4 8 Q4.6 3.6 8.8 8 Z" fill="none" stroke="#777" stroke-width="1"/><path d="M9.8 3.3 H15.8 L13.6 6 V9.5 L12 9.5 V6 Z" fill="#777"/></svg>
<div class="a" style="left:1274px;top:527px;font-size:14.2px;line-height:18px;color:#333;transform:scaleX(0.9770);transform-origin:0 0;">Azure AD filter</div>
<div class="box" style="left:1452px;top:988px;width:144px;height:32px;background:#3a8ff6"></div>
<div class="a" style="left:1508.8px;top:995px;font-size:15px;line-height:19px;color:#fff;transform:scaleX(0.9200);transform-origin:0 0;">Back</div>
<div class="box" style="left:1603px;top:988px;width:144px;height:32px;background:#3a8ff6"></div>
<div class="a" style="left:1659.5px;top:995px;font-size:15px;line-height:19px;color:#fff;transform:scaleX(0.9500);transform-origin:0 0;">Next</div>
<div class="box" style="left:1754px;top:988px;width:144px;height:32px;background:#3a8ff6"></div>
<div class="a" style="left:1776.7px;top:995px;font-size:15px;line-height:19px;color:#fff;transform:scaleX(0.9700);transform-origin:0 0;">Save &amp; Publish</div>
</body></html>
